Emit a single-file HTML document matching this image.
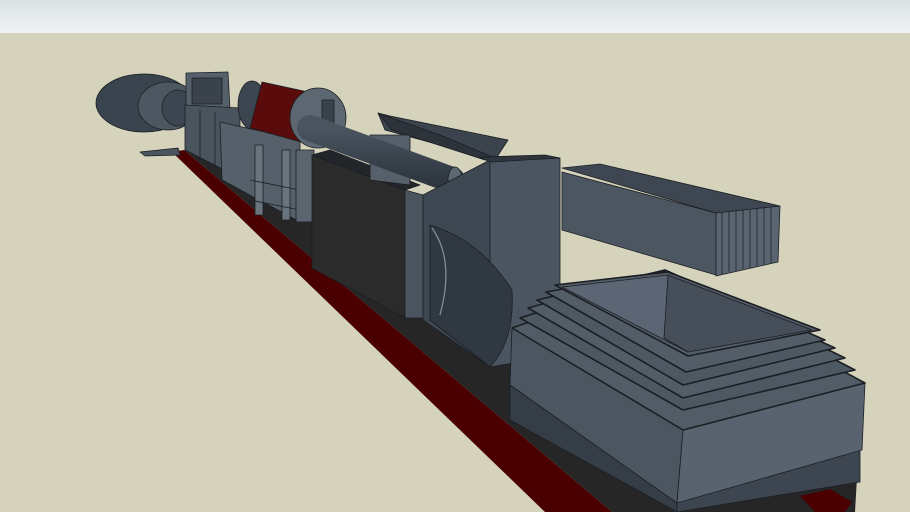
<!DOCTYPE html>
<html><head><meta charset="utf-8"><style>
html,body{margin:0;padding:0;width:910px;height:512px;overflow:hidden;background:#d6d3bc}
svg{display:block}
</style></head><body>
<svg width="910" height="512" viewBox="0 0 910 512" xmlns="http://www.w3.org/2000/svg">
<defs>
<linearGradient id="sky" x1="0" y1="0" x2="0" y2="1"><stop offset="0" stop-color="#d9e2e3"/><stop offset="1" stop-color="#f0f3f3"/></linearGradient>
<linearGradient id="pipe" x1="0" y1="0" x2="0" y2="1"><stop offset="0" stop-color="#4a5560"/><stop offset="1" stop-color="#2f3740"/></linearGradient>
</defs>
<rect x="0" y="0" width="910" height="33" fill="url(#sky)"/>
<rect x="0" y="33" width="910" height="479" fill="#d6d3bc"/>
<g stroke="#1b1f24" stroke-width="0.8" stroke-linejoin="round">
<polygon points="184,150 300,150 858,460 855,512 612,512" fill="#262626" stroke="none"/>
<polygon points="172,152 184,150 612,512 545,512" fill="#4a0000" stroke="none"/>
<polygon points="800,496 830,489 852,502 845,512 815,512" fill="#4a0000" stroke="none"/>
<ellipse cx="144" cy="103" rx="48" ry="29" fill="#3a444f"/>
<ellipse cx="168" cy="106" rx="30" ry="24" fill="#4d5762"/>
<ellipse cx="178" cy="108" rx="16" ry="18" fill="#3d4650"/>
<polygon points="140,152 178,148 180,155 145,156" fill="#4a545e"/>
<polygon points="186,73 228,72 230,110 186,110" fill="#56606b"/>
<rect x="192" y="78" width="30" height="26" fill="#3a434c"/>
<polygon points="185,105 240,108 240,178 185,150" fill="#4a545f"/>
<line x1="200" y1="110" x2="200" y2="160"/><line x1="215" y1="112" x2="215" y2="168"/>
<polygon points="220,122 300,140 300,222 222,180" fill="#55606a"/>
<rect x="255" y="145" width="8" height="70" fill="#6a747e"/>
<rect x="282" y="150" width="8" height="70" fill="#6a747e"/>
<line x1="250" y1="180" x2="300" y2="190"/><line x1="250" y1="200" x2="300" y2="210"/>
<rect x="296" y="150" width="18" height="72" fill="#5b6570"/>
<ellipse cx="252" cy="105" rx="14" ry="24" fill="#3c4650"/>
<polygon points="262,82 322,95 312,145 250,128" fill="#5a0b0b"/>
<ellipse cx="318" cy="118" rx="28" ry="30" fill="#5d6772"/>
<rect x="322" y="100" width="12" height="26" fill="#3a434c"/>
<polygon points="378,113 385,130 495,160 508,140 390,116" fill="#3b444d"/>
<polygon points="378,113 440,135 500,160 485,160 392,130" fill="#2c333a"/>
<polygon points="312,155 405,190 405,318 312,268" fill="#2b2b2b"/>
<polygon points="312,155 330,150 420,185 405,190" fill="#22262a"/>
<polygon points="405,190 423,195 423,318 405,318" fill="#4a5560"/>
<polygon points="370,135 410,135 410,185 370,180" fill="#55606b"/>
<line x1="310" y1="128" x2="452" y2="180" stroke="url(#pipe)" stroke-width="26" stroke-linecap="round"/>
<ellipse cx="455" cy="180" rx="7" ry="13" fill="#5d6772"/>
<polygon points="423,195 490,160 490,367 423,320" fill="#3e4852"/>
<polygon points="490,160 560,158 560,355 490,367" fill="#4a5561"/>
<polygon points="480,157 545,155 560,158 490,162" fill="#2e353d"/>
<path d="M430,225 Q480,240 512,290 Q515,340 490,367 L430,320 Z" fill="#303841"/>
<path d="M432,228 Q455,260 440,315" fill="none" stroke="#8892a0" stroke-width="1.2"/>
<polygon points="562,168 600,164 780,206 716,213" fill="#3e4751"/>
<polygon points="562,172 716,213 716,275 562,230" fill="#4c5661"/>
<polygon points="716,213 780,206 778,262 716,276" fill="#5a6470"/>
<g stroke="#2a3036" stroke-width="1">
<line x1="722" y1="212" x2="722" y2="274"/><line x1="729" y1="211" x2="729" y2="272"/>
<line x1="736" y1="210" x2="736" y2="271"/><line x1="743" y1="209" x2="743" y2="269"/>
<line x1="750" y1="209" x2="750" y2="268"/><line x1="757" y1="208" x2="757" y2="266"/>
<line x1="764" y1="207" x2="764" y2="265"/><line x1="771" y1="207" x2="771" y2="263"/>
</g>
<polygon points="510,385 677,500 677,512 510,420" fill="#353d46"/>
<polygon points="677,500 860,450 860,482 677,512" fill="#3d4650"/>
<polygon points="512,328 683,430 677,503 510,385" fill="#4c5661"/>
<polygon points="683,430 865,383 862,450 677,503" fill="#59636f"/>
<g stroke-width="1.6">
<polygon points="512,328 665,275 865,383 683,430" fill="#525c67"/>
<polygon points="520,318 665,272 855,370 683,410" fill="#4e5863"/>
<polygon points="528,308 665,270 845,358 683,398" fill="#535d68"/>
<polygon points="537,300 665,270 835,348 683,385" fill="#4e5863"/>
<polygon points="546,292 667,271 825,340 686,372" fill="#535d68"/>
<polygon points="555,285 668,272 820,330 688,356" fill="#535d68"/>
</g>
<polygon points="562,287 668,275 665,337 688,352" fill="#5b6573"/>
<polygon points="668,275 812,330 688,352 664,338" fill="#454e59"/>
</g>
</svg>
</body></html>
